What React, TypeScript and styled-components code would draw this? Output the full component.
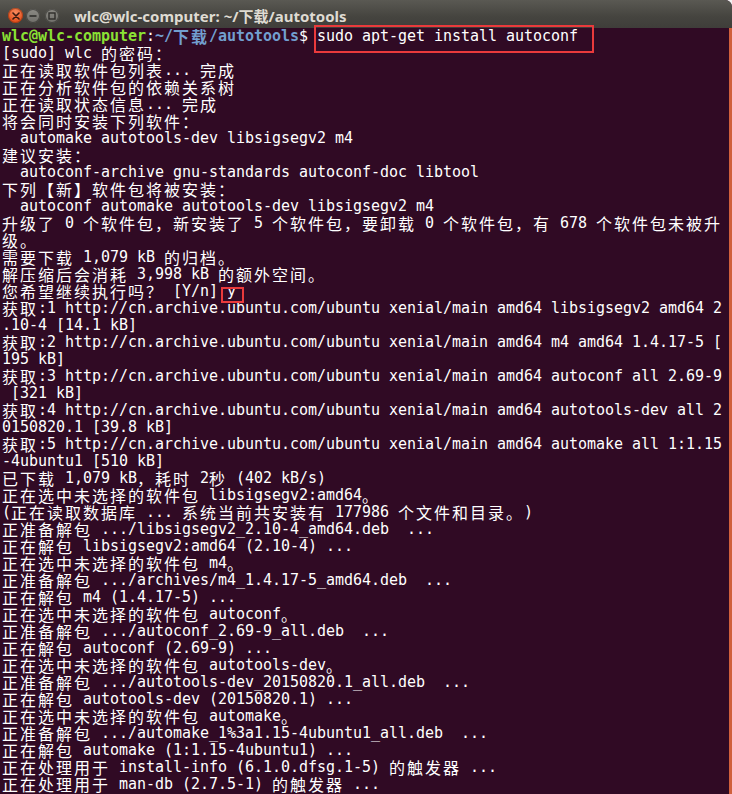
import React from 'react';
import styled, { createGlobalStyle } from 'styled-components';

const GlobalStyle = createGlobalStyle`
  html, body {
    margin: 0;
    padding: 0;
    background: #f2f2f2;
  }
`;

type Seg = {
    text: string;
    color?: string;
    bold?: boolean;
    box?: 'cmd' | 'answer';
};

type Line = string | Seg[];

const GREEN = '#8ae234';
const BLUE = '#729fcf';

const LINES: Line[] = [
    [
        { text: 'wlc@wlc-computer', color: GREEN, bold: true },
        { text: ':' },
        { text: '~/下载/autotools', color: BLUE, bold: true },
        { text: '$ ' },
        { text: 'sudo apt-get install autoconf', box: 'cmd' },
    ],
    '[sudo] wlc 的密码：',
    '正在读取软件包列表... 完成',
    '正在分析软件包的依赖关系树',
    '正在读取状态信息... 完成',
    '将会同时安装下列软件：',
    '  automake autotools-dev libsigsegv2 m4',
    '建议安装：',
    '  autoconf-archive gnu-standards autoconf-doc libtool',
    '下列【新】软件包将被安装：',
    '  autoconf automake autotools-dev libsigsegv2 m4',
    '升级了 0 个软件包，新安装了 5 个软件包，要卸载 0 个软件包，有 678 个软件包未被升',
    '级。',
    '需要下载 1,079 kB 的归档。',
    '解压缩后会消耗 3,998 kB 的额外空间。',
    [{ text: '您希望继续执行吗？ [Y/n] ' }, { text: 'y', box: 'answer' }],
    '获取:1 http://cn.archive.ubuntu.com/ubuntu xenial/main amd64 libsigsegv2 amd64 2',
    '.10-4 [14.1 kB]',
    '获取:2 http://cn.archive.ubuntu.com/ubuntu xenial/main amd64 m4 amd64 1.4.17-5 [',
    '195 kB]',
    '获取:3 http://cn.archive.ubuntu.com/ubuntu xenial/main amd64 autoconf all 2.69-9',
    ' [321 kB]',
    '获取:4 http://cn.archive.ubuntu.com/ubuntu xenial/main amd64 autotools-dev all 2',
    '0150820.1 [39.8 kB]',
    '获取:5 http://cn.archive.ubuntu.com/ubuntu xenial/main amd64 automake all 1:1.15',
    '-4ubuntu1 [510 kB]',
    '已下载 1,079 kB，耗时 2秒 (402 kB/s)',
    '正在选中未选择的软件包 libsigsegv2:amd64。',
    '(正在读取数据库 ... 系统当前共安装有 177986 个文件和目录。)',
    '正准备解包 .../libsigsegv2_2.10-4_amd64.deb  ...',
    '正在解包 libsigsegv2:amd64 (2.10-4) ...',
    '正在选中未选择的软件包 m4。',
    '正准备解包 .../archives/m4_1.4.17-5_amd64.deb  ...',
    '正在解包 m4 (1.4.17-5) ...',
    '正在选中未选择的软件包 autoconf。',
    '正准备解包 .../autoconf_2.69-9_all.deb  ...',
    '正在解包 autoconf (2.69-9) ...',
    '正在选中未选择的软件包 autotools-dev。',
    '正准备解包 .../autotools-dev_20150820.1_all.deb  ...',
    '正在解包 autotools-dev (20150820.1) ...',
    '正在选中未选择的软件包 automake。',
    '正准备解包 .../automake_1%3a1.15-4ubuntu1_all.deb  ...',
    '正在解包 automake (1:1.15-4ubuntu1) ...',
    '正在处理用于 install-info (6.1.0.dfsg.1-5) 的触发器 ...',
    '正在处理用于 man-db (2.7.5-1) 的触发器 ...',
];

// terminal cells: CJK and fullwidth chars take two columns
const isWide = (ch: string) => {
    const c = ch.codePointAt(0) || 0;
    return (
        (c >= 0x2e80 && c <= 0xa4cf) ||
        (c >= 0xac00 && c <= 0xd7a3) ||
        (c >= 0xf900 && c <= 0xfaff) ||
        (c >= 0xfe30 && c <= 0xfe4f) ||
        (c >= 0xff00 && c <= 0xff60) ||
        (c >= 0xffe0 && c <= 0xffe6)
    );
};

const renderCells = (text: string) => {
    const out: React.ReactNode[] = [];
    let run = '';
    Array.from(text).forEach((ch, i) => {
        if (isWide(ch)) {
            if (run) {
                out.push(run);
                run = '';
            }
            out.push(<Wide key={i}>{ch}</Wide>);
        } else {
            run += ch;
        }
    });
    if (run) out.push(run);
    return out;
};

const BOX_INSETS = {
    cmd: '-3px -16px -8px -3px',
    answer: '4px -8px -3px -6px',
};

const TerminalWindow = () => {
    return (
        <Window>
            <TitleBar>
                <Buttons>
                    <CloseButton>
                        <svg width="8" height="8" viewBox="0 0 8 8">
                            <path
                                d="M1 1L7 7M7 1L1 7"
                                stroke="#3a1a10"
                                strokeWidth="1.6"
                                strokeLinecap="round"
                            />
                        </svg>
                    </CloseButton>
                    <WinButton>
                        <svg width="8" height="8" viewBox="0 0 8 8">
                            <path d="M0.5 4H7.5" stroke="#2e2d2a" strokeWidth="1.6" />
                        </svg>
                    </WinButton>
                    <WinButton $gap={5}>
                        <svg width="8" height="8" viewBox="0 0 8 8">
                            <rect
                                x="1"
                                y="1"
                                width="6"
                                height="6"
                                fill="none"
                                stroke="#2e2d2a"
                                strokeWidth="1.4"
                            />
                        </svg>
                    </WinButton>
                </Buttons>
                <Title>wlc@wlc-computer: ~/下载/autotools</Title>
            </TitleBar>
            <Body>
                <Screen>
                    {LINES.map((line, i) => (
                        <Row key={i}>
                            {typeof line === 'string'
                                ? renderCells(line)
                                : line.map((seg, j) =>
                                      seg.box ? (
                                          <Boxed key={j} $inset={BOX_INSETS[seg.box]}>
                                              {renderCells(seg.text)}
                                          </Boxed>
                                      ) : (
                                          <Span key={j} $color={seg.color} $bold={seg.bold}>
                                              {renderCells(seg.text)}
                                          </Span>
                                      )
                                  )}
                        </Row>
                    ))}
                </Screen>
                <ScrollStrip />
            </Body>
        </Window>
    );
};

const App = () => (
    <>
        <GlobalStyle />
        <TerminalWindow />
    </>
);

const Window = styled.div`
    width: 732px;
    height: 794px;
    display: flex;
    flex-direction: column;
    overflow: hidden;
    border-top-right-radius: 7px;
    background: #300a24;
`;

const TitleBar = styled.div`
    height: 28px;
    flex-shrink: 0;
    display: flex;
    align-items: center;
    padding-top: 3px;
    box-sizing: border-box;
    background: linear-gradient(#5a5953, #45443f 60%, #3f3e3a);
`;

const Buttons = styled.div`
    display: flex;
    align-items: center;
    padding-left: 8px;
    width: 66px;
`;

const CloseButton = styled.div`
    width: 15px;
    height: 15px;
    border-radius: 50%;
    display: flex;
    align-items: center;
    justify-content: center;
    background: radial-gradient(circle at 50% 30%, #f58a5e, #e6531f 70%);
    box-shadow: inset 0 0 0 1px rgba(120, 40, 10, 0.5);
`;

const WinButton = styled.div<{ $gap?: number }>`
    width: 14px;
    height: 14px;
    margin-left: ${(p) => p.$gap ?? 3}px;
    border-radius: 50%;
    display: flex;
    align-items: center;
    justify-content: center;
    background: linear-gradient(#8c8b85, #6f6e69);
    box-shadow: inset 0 0 0 1px rgba(40, 40, 36, 0.6);
`;

const Title = styled.div`
    font-family: 'Noto Sans', 'Noto Sans CJK SC', sans-serif;
    font-weight: 700;
    font-size: 15px;
    line-height: 18px;
    color: #dfdbd2;
    white-space: nowrap;
`;

const Body = styled.div`
    flex: 1;
    display: flex;
    min-height: 0;
`;

const Screen = styled.div`
    flex: 1;
    padding-left: 2px;
    color: #ffffff;
    font-family: 'DejaVu Sans Mono', 'Noto Sans CJK SC', monospace;
    font-size: 15px;
    letter-spacing: -0.03px;
`;

const Row = styled.div`
    height: 17px;
    line-height: 17px;
    white-space: pre;
`;

const Span = styled.span<{ $color?: string; $bold?: boolean }>`
    color: ${(p) => p.$color ?? 'inherit'};
    font-weight: ${(p) => (p.$bold ? 700 : 400)};
`;

const Wide = styled.span`
    display: inline-block;
    width: 18px;
    height: 17px;
    font-family: 'Noto Sans CJK SC', sans-serif;
    font-size: 16px;
    line-height: 17px;
    letter-spacing: 0;
    text-align: left;
    vertical-align: top;
`;

const Boxed = styled.span<{ $inset: string }>`
    position: relative;
    display: inline-block;
    height: 17px;
    vertical-align: top;
    &::after {
        content: '';
        position: absolute;
        inset: ${(p) => p.$inset};
        border: 2px solid #ea3a3c;
        pointer-events: none;
    }
`;

const ScrollStrip = styled.div`
    width: 3px;
    background: #d0603c;
`;

export default App;
